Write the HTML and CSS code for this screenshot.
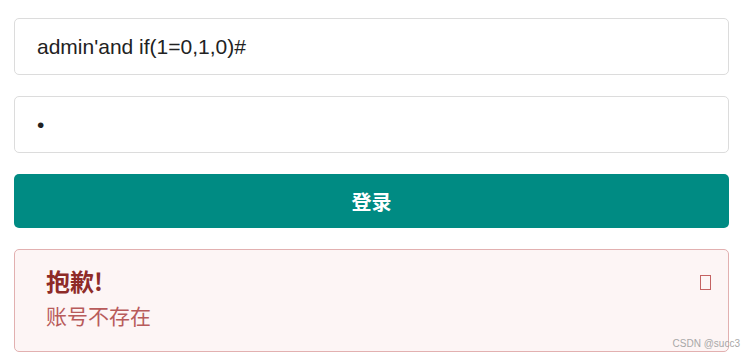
FILE: index.html
```html
<!DOCTYPE html>
<html lang="zh">
<head>
<meta charset="utf-8">
<link rel="stylesheet" href="styles.css">
</head>
<body>
<div class="page">
  <input class="field" type="text" value="admin'and if(1=0,1,0)#" readonly>
  <input class="field" type="password" value="a" readonly>
  <button class="btn">登录</button>
  <div class="alert">
    <div class="alert-body">
      <div class="alert-title">抱歉!</div>
      <div class="alert-msg">账号不存在</div>
    </div>
    <span class="close"></span>
  </div>
</div>
<div class="watermark">CSDN @succ3</div>
</body>
</html>
```
FILE: styles.css
```css
html, body { margin: 0; padding: 0; background: #fff; }
body { font-family: "Liberation Sans", Arial, "Noto Sans CJK SC", sans-serif; position: relative; width: 743px; height: 359px; overflow: hidden; }
.page { padding: 18px 14px 0 14px; display: flex; flex-direction: column; gap: 21px; }
.field {
  box-sizing: border-box; height: 57px; width: 100%;
  border: 1px solid #dcdcdc; border-radius: 5px;
  padding: 0 22px; font-size: 21px; color: #222;
  font-family: "Liberation Sans", Arial, sans-serif; outline: none; background: #fff;
}
.btn {
  height: 54px; width: 100%; border: none; border-radius: 5px;
  background: #008b83; color: #fff; font-size: 20px; font-weight: bold;
  font-family: "Noto Sans CJK SC", sans-serif;
}
.alert {
  box-sizing: border-box; height: 103px; border: 1px solid #e2b0b0; border-radius: 5px;
  background: #fdf5f5; display: flex; justify-content: space-between; padding: 15px 17px 0 31px;
}
.alert-title { font-family: "Noto Sans CJK SC", sans-serif; font-weight: bold; font-size: 24px; line-height: 32px; color: #8e2b28; }
.alert-msg { font-family: "Noto Sans CJK SC", sans-serif; font-size: 21px; line-height: 30px; margin-top: 3px; color: #b85b5b; }
.close { width: 9px; height: 13px; border: 1px solid #c46262; margin-top: 10px; }
.watermark { position: absolute; right: 3px; top: 338px; font-size: 10px; color: #a8a8a8; font-family: "Liberation Sans", Arial, sans-serif; }
```
